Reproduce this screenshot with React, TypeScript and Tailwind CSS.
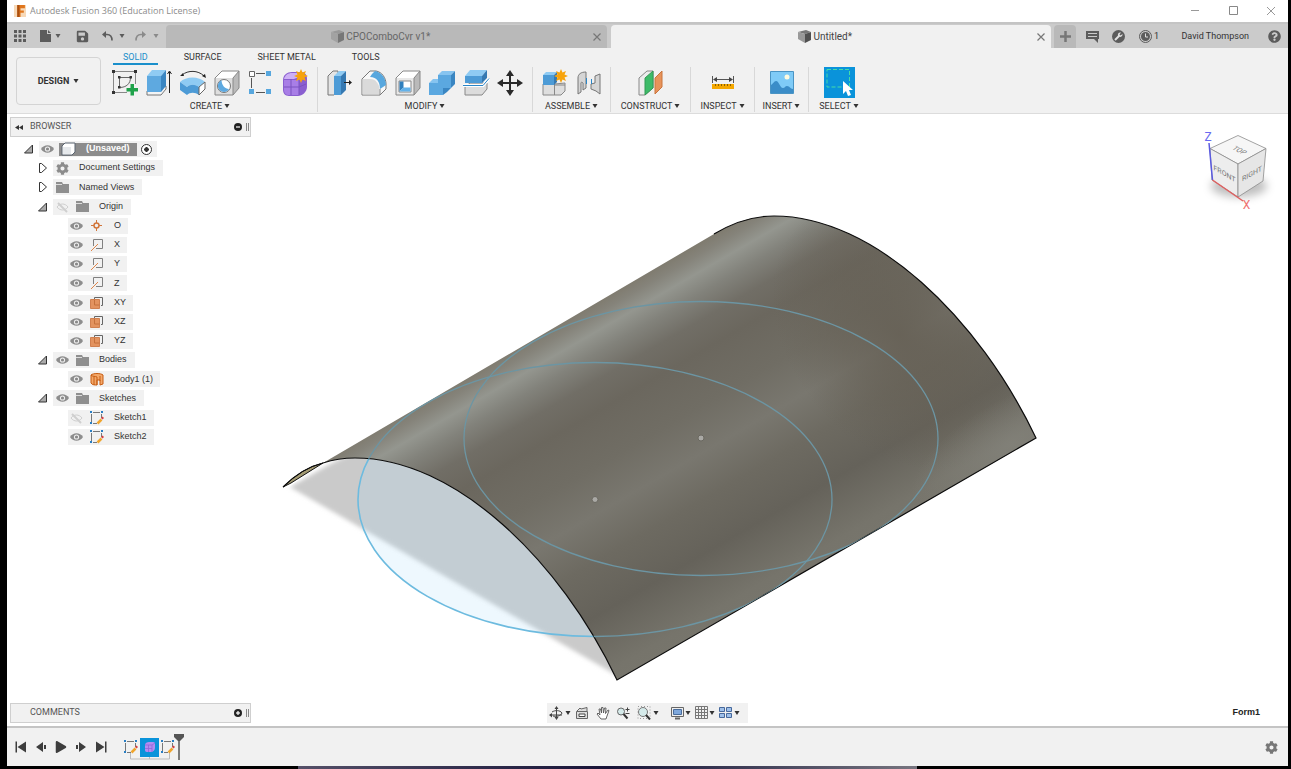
import React from "react";
import {
  FaCog,
  FaPlay,
  FaQuestionCircle,
  FaSave,
} from "react-icons/fa";

type SvgProps = { children: React.ReactNode; className?: string; box?: string };

function Svg({ children, className = "size-7", box = "0 0 28 28" }: SvgProps) {
  return (
    <svg viewBox={box} className={`${className} block shrink-0`} fill="none" aria-hidden="true">
      {children}
    </svg>
  );
}

function Caret({ className = "text-[#333]" }: { className?: string }) {
  return (
    <svg viewBox="0 0 6 4" className={`${className} block h-1 w-1.5 shrink-0`} aria-hidden="true">
      <path d="M.5 0h5L3 4z" fill="currentColor" />
    </svg>
  );
}

/* ---------- ribbon icons ---------- */

const SketchIcon = () => (
  <Svg>
    <path d="M3 2.500h20M2.500 3v20M24.500 3v12M3 23.500h13" stroke="#888" />
    <path d="M1 1h3v3H1zM23 1h3v3h-3zM1 22h3v3H1z" fill="#333" />
    <path d="M8.500 18V8.500h11M19.500 8.500c0 6-4 10-11 10" stroke="#666" />
    <path d="M7 7h2.500v2.500H7zM18.500 7H21v2.500h-2.500zM7 17h2.500v2.500H7z" fill="#333" />
    <path d="M19.500 15h3.500v4h4v3.500h-4v4h-3.500v-4h-4V19h4z" fill="#1fa24a" />
  </Svg>
);
const ExtrudeIcon = () => (
  <Svg>
    <path d="M2 22v4h14l5-6v-3z" fill="#f4f4f4" stroke="#777" />
    <path d="M2 7l5-6h14l-5 6z" fill="#8fcbf3" />
    <path d="M2 7h14v16H2z" fill="#5ea9e0" />
    <path d="M16 7l5-6v16l-5 6z" fill="#3a86c2" />
    <path d="M24.500 24V3M22.500 5l2-3 2 3" stroke="#222" />
  </Svg>
);
const RevolveIcon = () => (
  <Svg>
    <path d="M3 6C9 1 19 1 25 7" stroke="#333" />
    <path d="M1 7l3-3 1 3zM27 9l-4-2 3-2z" fill="#222" />
    <path d="M1 13c6-6 19-6 25 0l-6 5c-4-3-9-3-12 0z" fill="#8fcbf3" />
    <path d="M1 13l7 5c3-3 8-3 12 0v8c-4-3-9-3-12 0l-7-5z" fill="#4d9bd6" />
    <path d="M20 18l6-5v7l-6 6z" fill="#fff" stroke="#666" />
  </Svg>
);
const HoleIcon = () => (
  <Svg>
    <path d="M2 9l7-7h17l-6 7z" fill="#fff" />
    <path d="M2 9h18v17H2z" fill="#dedede" />
    <path d="M20 9l6-7v17l-6 7z" fill="#bababa" />
    <path d="M2 9l7-7h17v17l-6 7H2zM20 9l6-7M20 9v17" stroke="#888" />
    <circle cx="11" cy="17" r="6.500" fill="#fff" stroke="#777" />
    <path d="M8.500 11c-6 3-4 12 2.500 12 2 0 4-1 5-3-4 0-7.500-4-7.500-9z" fill="#5ea9e0" />
  </Svg>
);
const PatternIcon = () => (
  <Svg>
    <path d="M9 4.500h9M4.500 9v10M9 23.500h9" stroke="#555" />
    <path d="M2.500 2.500h5v5h-5z" fill="#fff" stroke="#666" />
    <path d="M19 2h5v5h-5zM2 20h5v5H2zM19 20h5v5h-5z" fill="#57a7de" />
  </Svg>
);
const Spark = ({ x, y }: { x: number; y: number }) => (
  <path
    transform={`translate(${x} ${y})`}
    d="M0-7l1.500 3.500L5-5 3.500-1.500 7 0 3.500 1.500 5 5 1.500 3.500 0 7-1.500 3.500-5 5-3.500 1.500-7 0-3.500-1.500-5-5-1.500-3.500z"
    fill="#f7a30b"
  />
);
const FormIcon = () => (
  <Svg>
    <path d="M2 11c0-5 4-8 9-8h9c4 0 6 3 6 7v8c0 5-5 9-9 9H8c-4 0-6-3-6-6z" fill="#8a5fd0" />
    <path d="M3 10c1-4 4-6 8-6h8c-1 4-3 5-6 6z" fill="#cdb0f5" />
    <path d="M3 11h15v15H8c-3 0-5-2-5-5z" fill="#a87ee6" />
    <path d="M10 10v16M3 18h15M18 11v15M18 18l7-3" stroke="#7a52c0" />
    <Spark x={20} y={7} />
  </Svg>
);
const PressPullIcon = () => (
  <Svg>
    <path d="M2 7l5-5h5v20l-4 4H2z" fill="#e4e4e4" stroke="#777" />
    <path d="M8 7l5-5h7l-5 5z" fill="#8fcbf3" />
    <path d="M8 7h7v19H8z" fill="#4d9bd6" />
    <path d="M15 7l5-5v19l-5 5z" fill="#3579b2" />
    <path d="M18 13.500h7" stroke="#222" />
    <path d="M23 11l3 2.500-3 2.500z" fill="#222" />
  </Svg>
);
const FilletIcon = () => (
  <Svg>
    <path d="M2 10l8-8h6c6 1 10 7 10 13v5l-6 6H2z" fill="#f8f8f8" stroke="#777" />
    <path d="M2.500 10H10c6 0 9 5 9.500 10v5.500h-17z" fill="#dadada" />
    <path d="M12 5l3-3c6 1 11 7 11 14l-6 4c0-7-3-12-10-12z" fill="#57a7de" />
    <path d="M20 20v6" stroke="#888" />
  </Svg>
);
const ShellIcon = () => (
  <Svg>
    <path d="M2 9l7-7h17l-6 7z" fill="#fff" />
    <path d="M2 9h18v17H2z" fill="#e8e8e8" />
    <path d="M20 9l6-7v17l-6 7z" fill="#bababa" />
    <path d="M2 9l7-7h17v17l-6 7H2zM20 9l6-7M20 9v17" stroke="#888" />
    <path d="M5 12h12v11H5z" fill="#fff" stroke="#888" />
    <path d="M5.500 12.500h4v6l-4 4z" fill="#2f7fbd" />
    <path d="M9.500 18.500h7v4h-11z" fill="#63b2ea" />
  </Svg>
);
const CombineIcon = () => (
  <Svg>
    <path d="M10 6l4-4h13l-4 4zM1 14l4-4h5v4z" fill="#86c4f0" />
    <path d="M27 2v13l-4 4V6zM15 19h8l-4 4-4 3z" fill="#3a86c2" />
    <path d="M1 14h9V6h13v13h-8v7H1z" fill="#5ba8e0" />
  </Svg>
);
const SplitIcon = () => (
  <Svg>
    <path d="M3 18l5-4h17v6l-5 6H3z" fill="#dcdcdc" stroke="#888" />
    <path d="M3 7l5-6h17l-5 6z" fill="#8fcbf3" />
    <path d="M3 7h17v7H3z" fill="#4d9bd6" />
    <path d="M20 7l5-6v8l-5 5z" fill="#3579b2" />
    <path d="M1 16.500h20l6-7" stroke="#fff" strokeWidth="3" />
    <path d="M1 16.500h20l6-7" stroke="#2a86c8" />
  </Svg>
);
const MoveIcon = () => (
  <Svg>
    <path d="M14 5v18M5 14h18" stroke="#2a2a2a" strokeWidth="2" />
    <path d="M14 1l4 6h-8zM14 27l4-6h-8zM1 14l6-4v8zM27 14l-6-4v8z" fill="#2a2a2a" />
  </Svg>
);
const ComponentIcon = () => (
  <Svg>
    <path d="M2 15h12l10-1v8l-4 4H2z" fill="#dedede" stroke="#888" />
    <path d="M13.500 15v11M14 16h10" stroke="#888" />
    <path d="M2 6l3-3h11l-3 3z" fill="#8fcbf3" />
    <path d="M2 6h11v10H2z" fill="#4d9bd6" />
    <path d="M13 6l3-3v10l-3 3z" fill="#3579b2" />
    <Spark x={20} y={7} />
  </Svg>
);
const JointIcon = () => (
  <Svg>
    <path d="M3 9c0-4 3-6 8-6v16l-3 2v-7c-1-1-2-1-2 0v9l-3 2z" fill="#d5d5d5" stroke="#777" />
    <path d="M25 5v20l-4-3-5-2v-5l4-1V7z" fill="#d5d5d5" stroke="#777" />
    <path d="M11.500 9v6M16.500 10v5" stroke="#2a86c8" />
  </Svg>
);
const PlaneIcon = () => (
  <Svg>
    <path d="M2 9l8-7h6v17l-8 7H2z" fill="#ececec" stroke="#888" />
    <path d="M8 9l8-7v17l-8 7z" fill="#3dbb68" stroke="#329a55" />
    <path d="M18 9l7-7v16l-7 7z" fill="#e8935a" stroke="#c9743c" />
  </Svg>
);
const MeasureIcon = () => (
  <Svg>
    <path d="M3.500 7v7M24.500 7v7M5 10.500h18" stroke="#555" />
    <path d="M4 10.500l4-2.500v5zM24 10.500l-4-2.500v5z" fill="#444" />
    <path d="M3 15h22v5H3z" fill="#f5a800" />
    <path d="M6.500 15v2M9.500 15v2M12.500 15v2M15.500 15v2M18.500 15v2M21.500 15v2" stroke="#8a6000" />
  </Svg>
);
const ImageIcon = () => (
  <Svg>
    <path d="M2.500 2.500h23v22h-23z" fill="#7fcbf7" stroke="#4a94c4" />
    <circle cx="19" cy="8" r="2.500" fill="#fffbe0" />
    <path d="M3 16c2-1 3-4 5-4 3 0 4 7 7 7 2 0 2-2 4-2 3 0 3 3 6 3v4H3z" fill="#3b8dc8" />
  </Svg>
);
const SelectIcon = () => (
  <Svg className="size-[31px]" box="0 0 31 31">
    <path d="M0 0h31v31H0z" fill="#0a93da" />
    <path d="M3 2.500h22.500v17.500H3z" stroke="#45dca8" strokeDasharray="4 2" />
    <path d="M19 14v13l3-3 2 5 3-1-2-5h4z" fill="#fff" />
  </Svg>
);

/* ---------- small icons ---------- */

const CubeIcon = ({ dim = false }: { dim?: boolean }) => (
  <Svg className="h-[13px] w-3.5" box="0 0 14 13">
    <path d="M1 2l8-2 5 2-6 2z" fill={dim ? "#999" : "#777"} />
    <path d="M1 2l7 2v9l-7-4z" fill={dim ? "#a2a2a2" : "#999"} />
    <path d="M8 4l6-2v8l-6 3z" fill={dim ? "#777" : "#505050"} />
  </Svg>
);
const UndoIcon = () => (
  <Svg className="size-3" box="0 0 12 12">
    <path d="M1 4.500l4-3.500v7z" fill="currentColor" />
    <path d="M4 4.500h2c3 0 5 2 5 6" stroke="currentColor" strokeWidth="1.600" />
  </Svg>
);
const Eye = ({ off = false }: { off?: boolean }) => (
  <Svg className="h-3 w-[13px]" box="0 0 13 12">
    {off ? (
      <g stroke="#cfcfcf">
        <path d="M1 6c3-4 8-4 11 0-3 4-8 4-11 0z" />
        <path d="M2 2l9 9" strokeWidth="2" />
      </g>
    ) : (
      <>
        <path d="M0 6c3-5 10-5 13 0-3 5-10 5-13 0z" fill="#8d8d8d" />
        <circle cx="6.500" cy="6" r="2.600" fill="#f0f0f0" />
        <circle cx="6.500" cy="6" r="1.600" fill="#888" />
      </>
    )}
  </Svg>
);
const SketchSmall = () => (
  <Svg className="size-3.5" box="0 0 14 14">
    <path d="M3 1.500h7M1.500 3v8M11.500 3v4M3 12.500h4" stroke="#777" />
    <path d="M0 0h2v2H0zM11 0h2v2h-2zM0 11h2v2H0z" fill="#2a7fc4" />
    <path d="M7.500 12.500l4-4" stroke="#f0a52c" strokeWidth="2.500" />
    <path d="M11 7l1.500-1.500L14 7l-1.500 1.500z" fill="#d84040" />
  </Svg>
);
const OriginPoint = () => (
  <Svg className="size-3.5" box="0 0 14 14">
    <path d="M6.500 1v11M1 6.500h11" stroke="#d2753a" />
    <circle cx="6.500" cy="6.500" r="2.500" fill="#f0f0f0" stroke="#d2753a" strokeWidth="1.500" />
  </Svg>
);
const AxisIcon = () => (
  <Svg className="size-3.5" box="0 0 14 14">
    <path d="M3.500 8V1.500h9v9H6" stroke="#808080" />
    <path d="M1 13l7-7" stroke="#e0864a" />
  </Svg>
);
const PlaneSmall = () => (
  <Svg className="size-3.5" box="0 0 14 14">
    <path d="M4.500 3V1.500h8v8H11" stroke="#666" />
    <path d="M.500 3.500h9v9h-9z" fill="#e3935f" stroke="#d08050" />
    <path d="M4.500 4v5h5" stroke="#c4713c" />
  </Svg>
);
const BodyIcon = () => (
  <Svg className="size-3.5" box="0 0 14 14">
    <path d="M1 3c2-2 10-2 12 0v9l-3 1V8H7v5c-2 0-5 0-6-2z" fill="#f3a86a" stroke="#c75c12" />
    <path d="M1 3c2 2 4 1 6 2v8M10 4v5M4 5v8" stroke="#c75c12" />
  </Svg>
);
const BoxIcon = () => (
  <Svg className="h-3.5 w-[15px]" box="0 0 15 14">
    <path d="M1 4l3-3h10v9l-3 3H1z" fill="#fff" stroke="#5a6470" />
    <path d="M2 5h8v7H2z" fill="#e6e9ec" />
  </Svg>
);

/* ---------- top bars ---------- */

function TitleBar() {
  return (
    <header className="flex h-[22px] shrink-0 items-center bg-white pr-3 pl-[7px] font-['Open_Sans',sans-serif] text-[9px] text-[#8b8b8b]">
      <Svg className="size-3" box="0 0 11 11">
        <path d="M0 0h11v11H0z" fill="#f7d9b8" />
        <path d="M3 0h7v3H6v2h3v2H6v4H3z" fill="#e0761c" />
        <path d="M3 0h2v11H3z" fill="#a94f10" />
      </Svg>
      <h1 className="ml-1">Autodesk Fusion 360 (Education License)</h1>
      <div className="ml-auto flex items-center gap-7">
        <button aria-label="Minimize">
          <Svg className="size-2.5" box="0 0 10 10"><path d="M1 4.500h8" stroke="#999" /></Svg>
        </button>
        <button aria-label="Maximize">
          <Svg className="size-2.5" box="0 0 10 10"><path d="M1.500.500h8v8h-8z" stroke="#888" /></Svg>
        </button>
        <button aria-label="Close">
          <Svg className="size-2.5" box="0 0 10 10"><path d="M1 1l8 8M9 1L1 9" stroke="#999" /></Svg>
        </button>
      </div>
    </header>
  );
}

function DocTab({ name, active = false }: { name: string; active?: boolean }) {
  return (
    <div
      className={`flex min-w-0 flex-1 items-center rounded-t-sm pr-1 ${
        active ? "bg-[#f1f1f1] text-[#444]" : "bg-[#b9b9b9] text-[#666]"
      }`}
    >
      <button className="flex flex-1 items-center justify-center gap-0.5 pr-1 text-[10px]">
        <CubeIcon dim={!active} />
        <span>{name}</span>
      </button>
      <button aria-label={`Close ${name}`} className="-ml-2 p-0.5">
        <Svg className="size-2" box="0 0 8 8"><path d="M.5.5l7 7M7.500.5l-7 7" stroke="#777" strokeWidth="1.200" /></Svg>
      </button>
    </div>
  );
}

function TabBar() {
  return (
    <div className="flex h-[26px] shrink-0 border-t-2 border-[#c4c4c4] bg-[#cbcbcb] text-[#5c5c5c]">
      <div className="flex w-[159px] shrink-0 items-center pl-[7px]">
        <button aria-label="Show data panel">
          <Svg className="size-3" box="0 0 12 12">
            <path d="M0 0h3v3H0zM4.500 0h3v3h-3zM9 0h3v3H9zM0 4.500h3v3H0zM4.500 4.500h3v3h-3zM9 4.500h3v3H9zM0 9h3v3H0zM4.500 9h3v3h-3zM9 9h3v3H9z" fill="currentColor" />
          </Svg>
        </button>
        <button aria-label="File" className="ml-3.5 flex items-center gap-1">
          <Svg className="h-3 w-[11px]" box="0 0 11 12">
            <path d="M0 0h7v4h4v8H0z" fill="currentColor" />
            <path d="M8 0l3 3H8z" fill="currentColor" />
          </Svg>
          <Caret className="text-[#5c5c5c]" />
        </button>
        <button aria-label="Save" className="ml-[15px]"><FaSave className="size-[13px]" /></button>
        <button aria-label="Undo" className="ml-3 flex items-center gap-1.5">
          <UndoIcon />
          <Caret className="text-[#5c5c5c]" />
        </button>
        <button aria-label="Redo" className="ml-2.5 flex items-center gap-1.5 text-[#8a8a8a]">
          <span className="block -scale-x-100"><UndoIcon /></span>
          <Caret className="text-[#8a8a8a]" />
        </button>
      </div>
      <div className="flex min-w-0 flex-1 gap-1 pt-px">
        <DocTab name="CPOComboCvr v1*" />
        <DocTab name="Untitled*" active />
      </div>
      <div className="flex w-[237px] shrink-0 items-center pt-px pr-[7px] pl-[3px]">
        <button aria-label="New tab" className="flex h-full w-[22px] items-center justify-center rounded-t-sm bg-[#b9b9b9]">
          <Svg className="size-[11px]" box="0 0 11 11"><path d="M5.500 0v11M0 5.500h11" stroke="#777" strokeWidth="2.500" /></Svg>
        </button>
        <button aria-label="Feedback" className="ml-2.5">
          <Svg className="size-[13px]" box="0 0 13 13">
            <path d="M0 1h13v8h-1v4L8 9H0z" fill="currentColor" />
            <path d="M2 3.500h9M2 6.500h9" stroke="#cbcbcb" />
          </Svg>
        </button>
        <button aria-label="Extensions" className="ml-[13px]">
          <Svg className="size-[13px]" box="0 0 13 13">
            <circle cx="6.500" cy="6.500" r="6.500" fill="currentColor" />
            <path d="M3 10l4-4" stroke="#e0e0e0" strokeWidth="2" />
            <path d="M10.500 4L8.500 5.500 7.500 4.500 9 2.500C6.500 2 5.500 4 6 6c2 2 5 .5 4.500-2z" fill="#e0e0e0" />
          </Svg>
        </button>
        <button aria-label="Job status" className="ml-3.5 flex items-center gap-0.5 text-[9px] text-[#333]">
          <Svg className="size-[13px] text-[#5c5c5c]" box="0 0 13 13">
            <circle cx="6.500" cy="6.500" r="6" stroke="currentColor" />
            <circle cx="6.500" cy="6.500" r="4.500" fill="currentColor" />
            <path d="M6.500 3.500v3.500H9" stroke="#e0e0e0" />
          </Svg>
          <span>1</span>
        </button>
        <button className="ml-auto text-[9px] text-[#333]">David Thompson</button>
        <button aria-label="Help" className="ml-[19px]"><FaQuestionCircle className="size-[13px]" /></button>
      </div>
    </div>
  );
}

type Group = { label: string; width: string; tools: [string, React.ReactNode][] };

const groups: Group[] = [
  {
    label: "CREATE",
    width: "w-[215px]",
    tools: [
      ["Create Sketch", <SketchIcon />],
      ["Extrude", <ExtrudeIcon />],
      ["Revolve", <RevolveIcon />],
      ["Hole", <HoleIcon />],
      ["Pattern", <PatternIcon />],
      ["Create Form", <FormIcon />],
    ],
  },
  {
    label: "MODIFY",
    width: "w-[215px]",
    tools: [
      ["Press Pull", <PressPullIcon />],
      ["Fillet", <FilletIcon />],
      ["Shell", <ShellIcon />],
      ["Combine", <CombineIcon />],
      ["Split Body", <SplitIcon />],
      ["Move", <MoveIcon />],
    ],
  },
  { label: "ASSEMBLE", width: "w-[78px]", tools: [["New Component", <ComponentIcon />], ["Joint", <JointIcon />]] },
  { label: "CONSTRUCT", width: "w-20", tools: [["Offset Plane", <PlaneIcon />]] },
  { label: "INSPECT", width: "w-16", tools: [["Measure", <MeasureIcon />]] },
  { label: "INSERT", width: "w-[54px]", tools: [["Decal", <ImageIcon />]] },
  { label: "SELECT", width: "w-[60px]", tools: [["Select tool", <SelectIcon />]] },
];

function Ribbon() {
  return (
    <div className="flex h-[66px] shrink-0 border-b border-[#dcdcdc] bg-[#f1f1f1] text-[9px] leading-3 text-[#333]">
      <button className="mt-[9px] ml-[9px] flex h-12 w-[85px] items-center justify-center gap-1 rounded-sm border border-[#d4d4d4] font-bold">
        DESIGN <Caret />
      </button>
      <div className="flex flex-col pl-0.5">
        <nav className="flex gap-4 pt-[3px] pl-2.5">
          {["SOLID", "SURFACE", "SHEET METAL", "TOOLS"].map((t) => (
            <button
              key={t}
              className={`h-3.5 border-b-2 px-2.5 ${
                t === "SOLID" ? "border-[#1a8fcb] text-[#1a8fcb]" : "border-transparent"
              }`}
            >
              {t}
            </button>
          ))}
        </nav>
        <div className="flex flex-1 divide-x divide-[#d8d8d8] pt-0.5 pb-[3px]">
          {groups.map((g) => (
            <section key={g.label} className={`${g.width} flex shrink-0 flex-col items-center`}>
              <div className="flex h-[31px] items-center gap-1.5">
                {g.tools.map(([name, icon]) => (
                  <button key={name} aria-label={name}>{icon}</button>
                ))}
              </div>
              <button className="mt-0.5 flex items-center gap-0.5">
                {g.label} <Caret />
              </button>
            </section>
          ))}
        </div>
      </div>
    </div>
  );
}

/* ---------- browser tree ---------- */

type Node = {
  label: string;
  depth: 1 | 2;
  kind: "settings" | "folder" | "point" | "axis" | "plane" | "body" | "sketch";
  open?: boolean;
  eye?: "on" | "off";
};

const nodes: Node[] = [
  { label: "Document Settings", depth: 1, kind: "settings", open: false },
  { label: "Named Views", depth: 1, kind: "folder", open: false },
  { label: "Origin", depth: 1, kind: "folder", open: true, eye: "off" },
  { label: "O", depth: 2, kind: "point", eye: "on" },
  { label: "X", depth: 2, kind: "axis", eye: "on" },
  { label: "Y", depth: 2, kind: "axis", eye: "on" },
  { label: "Z", depth: 2, kind: "axis", eye: "on" },
  { label: "XY", depth: 2, kind: "plane", eye: "on" },
  { label: "XZ", depth: 2, kind: "plane", eye: "on" },
  { label: "YZ", depth: 2, kind: "plane", eye: "on" },
  { label: "Bodies", depth: 1, kind: "folder", open: true, eye: "on" },
  { label: "Body1 (1)", depth: 2, kind: "body", eye: "on" },
  { label: "Sketches", depth: 1, kind: "folder", open: true, eye: "on" },
  { label: "Sketch1", depth: 2, kind: "sketch", eye: "off" },
  { label: "Sketch2", depth: 2, kind: "sketch", eye: "on" },
];

const kindIcons = {
  settings: <FaCog className="size-[13px] text-[#8c8c8c]" />,
  folder: (
    <Svg className="h-[11px] w-[13px]" box="0 0 13 11">
      <path d="M0 0h6l1 2h6v9H0z" fill="#8f8f8f" />
      <path d="M0 2.500h6" stroke="#ddd" />
    </Svg>
  ),
  point: <OriginPoint />,
  axis: <AxisIcon />,
  plane: <PlaneSmall />,
  body: <BodyIcon />,
  sketch: <SketchSmall />,
};

function Twisty({ open }: { open: boolean }) {
  return (
    <button aria-label={open ? "Collapse" : "Expand"} className="block">
      <Svg className="size-2.5" box="0 0 10 10">
        {open ? (
          <path d="M8.500 1v8h-8z" fill="#aaa" stroke="#333" />
        ) : (
          <path d="M1.500.5h2l5 4.500-5 4.500h-2z" fill="#fff" stroke="#333" />
        )}
      </Svg>
    </button>
  );
}

function PanelToggle({ label, plus }: { label: string; plus: boolean }) {
  return (
    <div className="ml-auto flex items-center gap-1">
      <button aria-label={label}>
        <Svg className="size-2" box="0 0 8 8">
          <circle cx="4" cy="4" r="4" fill="#222" />
          <path d="M2 4h4" stroke="#fff" strokeWidth="1.200" />
          {plus && <path d="M4 2v4" stroke="#fff" strokeWidth="1.200" />}
        </Svg>
      </button>
      <span className="h-2 w-[3px] border-x border-[#888]" />
    </div>
  );
}

function BrowserPanel() {
  return (
    <aside className="relative w-[241px] text-[9px] text-[#333]">
      <div className="flex h-5 items-center border border-[#cfcfcf] bg-[#f1f1f1] pr-px pl-1">
        <button aria-label="Collapse browser">
          <Svg className="h-[5px] w-2" box="0 0 8 5"><path d="M4 0v5L0 2.500zM8 0v5L4 2.500z" fill="#333" /></Svg>
        </button>
        <h2 className="ml-[7px] text-[#555]">BROWSER</h2>
        <PanelToggle label="Hide browser" plus={false} />
      </div>
      <ul className="mt-1 flex h-[304px] flex-col justify-between font-['Liberation_Sans',sans-serif]">
        <li className="flex h-4 items-center gap-[5px] pl-3.5">
          <Twisty open />
          <div className="flex h-4 items-center bg-[#f1f1f1] pr-1 pl-0.5">
            <Eye />
            <button className="ml-[5px] flex h-[13px] w-[78px] items-center gap-2.5 bg-[#8c8c8c] pl-0.5 font-bold text-white">
              <BoxIcon />
              (Unsaved)
            </button>
            <label className="ml-1 flex size-3 items-center">
              <input
                type="radio"
                name="active"
                defaultChecked
                aria-label="Activate component"
                className="size-[11px] appearance-none rounded-full border border-[#333] bg-[radial-gradient(circle,#333_0_2px,#fff_2.500px)]"
              />
            </label>
          </div>
        </li>
        {nodes.map((n) => (
          <li key={n.label} className={`flex h-4 items-center ${n.depth === 1 ? "gap-[5px] pl-7" : "pl-[58px]"}`}>
            {n.depth === 1 && <Twisty open={!!n.open} />}
            <div
              className={`flex h-4 items-center bg-[#f1f1f1] ${
                n.depth === 1 ? "pr-2 pl-[3px]" : "pr-[7px] pl-0.5"
              }`}
            >
              {n.eye && (
                <button aria-label={`Visibility of ${n.label}`} className="mr-[7px]">
                  <Eye off={n.eye === "off"} />
                </button>
              )}
              {kindIcons[n.kind]}
              <span className="ml-2.5 whitespace-nowrap">{n.label}</span>
            </div>
          </li>
        ))}
      </ul>
    </aside>
  );
}

/* ---------- model ---------- */

function Model() {
  const surface =
    "M323 463L714 234Q744 216 774 216C874 216 979 318 1036 438L617 680C560 560 455 458 355 458Q338 458 323 463Z";
  return (
    <svg
      viewBox="7 114 1281 612"
      className="absolute inset-0 h-full w-full"
      role="img"
      aria-label="Curved surface body with two circular sketches"
    >
      <defs>
        <linearGradient id="steel" gradientUnits="userSpaceOnUse" x1="280" y1="485" x2="450" y2="779">
          <stop offset="0" stopColor="#7f7b6f" />
          <stop offset=".03" stopColor="#85837a" />
          <stop offset=".075" stopColor="#94968f" />
          <stop offset=".13" stopColor="#82827b" />
          <stop offset=".2" stopColor="#716e66" />
          <stop offset=".28" stopColor="#6b675e" />
          <stop offset=".42" stopColor="#706d64" />
          <stop offset=".54" stopColor="#79776f" />
          <stop offset=".66" stopColor="#6d6a61" />
          <stop offset=".8" stopColor="#65625a" />
          <stop offset=".96" stopColor="#76746b" />
          <stop offset="1" stopColor="#77756c" />
        </linearGradient>
        <radialGradient id="dusk" gradientUnits="userSpaceOnUse" cx="0" cy="0" r="1" gradientTransform="translate(900 335) rotate(50) scale(150 110)">
          <stop offset="0" stopColor="#655f54" stopOpacity=".85" />
          <stop offset=".5" stopColor="#655f54" stopOpacity=".5" />
          <stop offset="1" stopColor="#655f54" stopOpacity="0" />
        </radialGradient>
        <radialGradient id="glow" gradientUnits="userSpaceOnUse" cx="0" cy="0" r="1" gradientTransform="translate(1010 445) rotate(-30) scale(110 45)">
          <stop offset="0" stopColor="#828179" stopOpacity=".9" />
          <stop offset="1" stopColor="#828179" stopOpacity="0" />
        </radialGradient>
        <clipPath id="body"><path d={surface} /></clipPath>
        <clipPath id="arch">
          <path d="M270 500L323 463Q338 458 355 458C455 458 560 560 617 680V700H270Z" />
        </clipPath>
        <filter id="soft" x="-5%" y="-5%" width="110%" height="110%">
          <feGaussianBlur stdDeviation="2" />
        </filter>
      </defs>
      <g clipPath="url(#arch)">
        <path d="M290 487L330 464L380 440L640 600L616 675Z" fill="#cacaca" filter="url(#soft)" />
        <ellipse cx="595" cy="499.500" rx="237" ry="137" fill="#a9dcf8" fillOpacity=".2" />
        <ellipse cx="595" cy="499.500" rx="237" ry="137" fill="none" stroke="#6dbbdf" strokeWidth="1.600" />
      </g>
      <path d="M283 487Q302 468 323 463L291 483Z" fill="#a39a72" stroke="#111" />
      <path d={surface} fill="url(#steel)" />
      <g clipPath="url(#body)">
        <path d="M700 200H1050V500H700Z" fill="url(#dusk)" />
        <path d="M850 350H1050V550H850Z" fill="url(#glow)" />
      </g>
      <path
        d="M714 234Q744 216 774 216C874 216 979 318 1036 438L617 680C560 560 455 458 355 458Q338 458 323 463Q302 468 283 487"
        fill="none"
        stroke="#0c0c0c"
        strokeWidth="1.200"
      />
      <g fill="none" stroke="#6c95a3" strokeWidth="1.300" clipPath="url(#body)">
        <ellipse cx="701" cy="438.500" rx="237" ry="137" />
        <ellipse cx="595" cy="499.500" rx="237" ry="137" />
      </g>
      <g fill="#aaa9a5" stroke="#6a6860">
        <circle cx="701" cy="438" r="3" />
        <circle cx="595" cy="499.500" r="3" />
      </g>
    </svg>
  );
}

function ViewCube() {
  return (
    <svg viewBox="0 0 76 88" className="absolute top-3.5 right-4 h-[88px] w-[76px] overflow-visible" role="img" aria-label="View cube">
      <defs>
        <filter id="cubeShadow" x="-30%" y="-80%" width="160%" height="260%">
          <feGaussianBlur stdDeviation="4" />
        </filter>
      </defs>
      <ellipse cx="43" cy="58" rx="28" ry="11" fill="#000" fillOpacity=".25" filter="url(#cubeShadow)" />
      <g stroke="#8c8c8c" strokeLinejoin="round" strokeWidth=".8">
        <path d="M42 7.500L70 20.500 42 36 14 20.500z" fill="#f6f6f6" />
        <path d="M14 20.500L42 36V69L16 52z" fill="#ededed" />
        <path d="M70 20.500L42 36V69L67 53z" fill="#e6e6e6" />
      </g>
      <g fill="#777" fontFamily="Roboto, sans-serif" fontSize="7" textAnchor="middle">
        <text transform="translate(41.500 24) rotate(27) skewX(-25)">TOP</text>
        <text transform="translate(28.500 48) skewY(30)">FRONT</text>
        <text transform="translate(56 48) skewY(-29)">RIGHT</text>
      </g>
      <path d="M13 15L16.500 52" stroke="#5a5ae0" strokeWidth="1.500" />
      <path d="M16.500 52L47 73" stroke="#e06060" strokeWidth="1.500" />
      <g fontFamily="Roboto, sans-serif" fontSize="12" textAnchor="middle">
        <text x="12" y="13" fill="#6a6af0">Z</text>
        <text x="50.500" y="81" fill="#f07070">X</text>
      </g>
    </svg>
  );
}

/* ---------- navigation + timeline ---------- */

function NavBar() {
  const c = "size-3.5";
  return (
    <div className="flex h-5 items-center bg-[#f1f1f1] pr-2 pl-0.5 text-[#444]">
      <button aria-label="Orbit" className="flex items-center gap-0.5">
        <Svg className={c} box="0 0 14 14">
          <path d="M7.500 1v12M1 9h12M3 6c3-2 8-2 10 1-1 3-6 4-9 3" stroke="#444" />
          <path d="M7.500 0l2 3h-4zM7.500 14l2-3h-4zM3 7L0 9l3 2.500z" fill="#444" />
        </Svg>
        <Caret />
      </button>
      <button aria-label="Look at" className="ml-1">
        <Svg className={c} box="0 0 14 14">
          <path d="M1.500 5.500h11v7h-11zM2 5l3-3 1 1 6-1.500V5" fill="#ddd" stroke="#666" />
          <path d="M4 8h6v2.500H4z" fill="#fff" stroke="#444" />
        </Svg>
      </button>
      <button aria-label="Pan" className="ml-[7px]">
        <Svg className={c} box="0 0 14 14">
          <path d="M5 13L1 8l1-1 2 2-1-6h1.500l1 4V1.500H7L7.500 7l1-5H10l-.5 5.500L12 4l1 .500L11 10l-1 3z" fill="#fff" stroke="#555" strokeWidth=".9" />
        </Svg>
      </button>
      <button aria-label="Zoom" className="ml-1.5">
        <Svg className={c} box="0 0 14 14">
          <circle cx="5" cy="5.500" r="3.500" fill="#d5eaea" stroke="#666" />
          <path d="M7.500 8l4 4.500" stroke="#333" strokeWidth="2" />
          <path d="M9.500 3.500h4M11.500 1.500v4M9.500 7.500h4" stroke="#444" />
        </Svg>
      </button>
      <button aria-label="Fit" className="ml-[7px] flex items-center gap-0.5">
        <Svg className={c} box="0 0 14 14">
          <path d="M1 .500h12v12H1z" stroke="#999" strokeDasharray="1 2" />
          <circle cx="6" cy="6" r="4.500" fill="#d5eaea" stroke="#777" />
          <path d="M9 9l4 4.500" stroke="#333" strokeWidth="2" />
        </Svg>
        <Caret />
      </button>
      <button aria-label="Display settings" className="ml-3 flex items-center">
        <Svg className={c} box="0 0 14 14">
          <path d="M.500 1.500h12v9H.500z" fill="#eee" stroke="#666" />
          <path d="M2.500 3.500h8v5h-8z" fill="#7fa8dc" stroke="#4a6d9c" />
          <path d="M4 12.500h5" stroke="#666" strokeWidth="2" />
        </Svg>
        <Caret />
      </button>
      <button aria-label="Grid and snaps" className="ml-1 flex items-center">
        <Svg className={c} box="0 0 14 14">
          <path d="M.500.500h12v12H.500zM3.500 0v13M6.500 0v13M9.500 0v13M0 3.500h13M0 6.500h13M0 9.500h13" stroke="#777" />
        </Svg>
        <Caret />
      </button>
      <button aria-label="Viewports" className="ml-1 flex items-center gap-0.5">
        <Svg className="h-3.5 w-[13px]" box="0 0 13 14">
          <path d="M.500 1.500h5v4h-5zM7.500 1.500h5v4h-5zM.500 7.500h5v4h-5zM7.500 7.500h5v4h-5z" fill="#9fc0ea" stroke="#47699c" />
        </Svg>
        <Caret />
      </button>
    </div>
  );
}

function Timeline() {
  return (
    <footer className="flex h-10 shrink-0 items-center border-t-2 border-[#c4c4c4] bg-[#f1f1f1] pr-2.5 pl-2 text-[#3d3d3d]">
      <div className="flex items-center gap-2">
        <button aria-label="Go to start">
          <Svg className="size-3" box="0 0 12 12"><path d="M.5.500H2v11H.5zM11 .500v11L2.500 6z" fill="currentColor" /></Svg>
        </button>
        <button aria-label="Step back">
          <Svg className="size-3" box="0 0 12 12"><path d="M8 1v10L1 6zM9 4h2v4H9z" fill="currentColor" /></Svg>
        </button>
        <button aria-label="Play"><FaPlay className="size-3" /></button>
        <button aria-label="Step forward">
          <Svg className="size-3" box="0 0 12 12"><path d="M4 1v10l7-5zM1 4h2v4H1z" fill="currentColor" /></Svg>
        </button>
        <button aria-label="Go to end">
          <Svg className="size-3" box="0 0 12 12"><path d="M10 .500h1.500v11H10zM1 .500v11L9.500 6z" fill="currentColor" /></Svg>
        </button>
      </div>
      <div className="relative ml-[15px] flex items-center">
        <svg viewBox="0 0 60 28" className="absolute top-0 left-0 h-7 w-[60px]" aria-hidden="true">
          <path d="M8.500 18v7h39v-6M27.500 18v7" fill="none" stroke="#bbb" />
        </svg>
        <button aria-label="Sketch1 feature" className="relative flex h-5 w-[18px] items-center pl-0.5"><SketchSmall /></button>
        <button aria-label="Form1 feature" className="relative flex size-[19px] items-center justify-center bg-[#0a93da]">
          <Svg className="size-3" box="0 0 12 12">
            <path d="M1 4c0-2 2-3 4-3h4c2 0 2 1 2 3v3c0 2-2 4-4 4H3c-2 0-2-1-2-3z" fill="#b48cf0" />
            <path d="M1 4h7v7M8 4l3-2M4.500 4v7M1 7.500h7" stroke="#8f66d8" strokeWidth=".8" />
          </Svg>
        </button>
        <button aria-label="Sketch2 feature" className="relative flex h-5 w-4 items-center pl-0.5"><SketchSmall /></button>
        <svg viewBox="0 0 10 26" className="relative -ml-px h-[26px] w-2.5" aria-hidden="true">
          <path d="M0 0h10v3L6 7H4L0 3z" fill="#555" />
          <path d="M5 6v20" stroke="#555" strokeWidth="1.500" />
        </svg>
      </div>
      <button aria-label="Timeline settings" className="ml-auto"><FaCog className="size-[13px] text-[#777]" /></button>
    </footer>
  );
}

export default function App() {
  return (
    <div className="flex h-screen flex-col bg-black pr-[3px] pl-[7px] font-[Roboto,sans-serif]">
      <TitleBar />
      <TabBar />
      <Ribbon />
      <main className="relative flex min-h-0 flex-1 flex-col justify-between overflow-hidden bg-white pt-[3px] pb-[3px] pl-[3px]">
        <Model />
        <ViewCube />
        <BrowserPanel />
        <div className="relative grid grid-cols-3 items-center pr-7">
          <div className="flex h-5 w-[241px] items-center border border-[#cfcfcf] bg-[#f1f1f1] pr-px pl-[19px] text-[9px] text-[#555]">
            <h2>COMMENTS</h2>
            <PanelToggle label="Show comments" plus />
          </div>
          <div className="flex justify-center pl-[26px]">
            <NavBar />
          </div>
          <p className="text-right font-['Liberation_Sans',sans-serif] text-[9px] font-bold text-[#222]">Form1</p>
        </div>
      </main>
      <Timeline />
      <div className="flex h-[3px] shrink-0 justify-center pr-[81px]">
        <div className="w-[619px] bg-linear-to-r from-[#555068] via-[#191438] to-[#77757f]" />
      </div>
    </div>
  );
}
